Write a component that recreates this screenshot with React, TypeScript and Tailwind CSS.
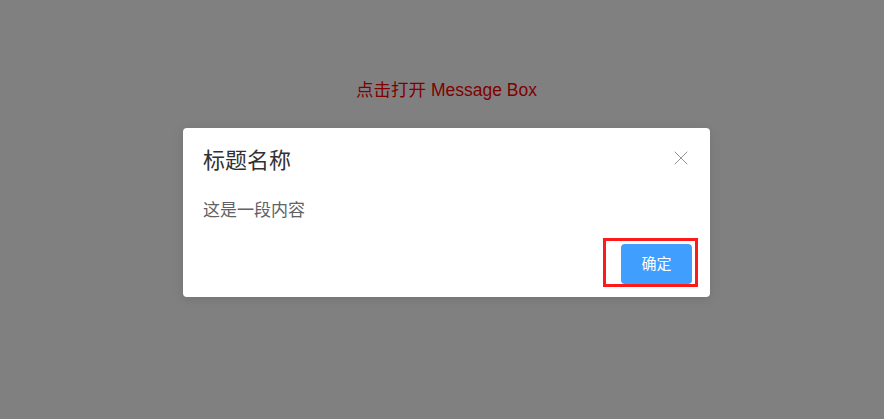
import { X } from "lucide-react"

const cjk = { fontFamily: '"Liberation Sans", "Noto Sans CJK SC", sans-serif' }

export default function App() {
  return (
    <div className="min-h-screen w-full bg-[#808080]" style={cjk}>
      <div className="flex flex-col items-center pl-[9px] pt-[78px]">
        {/* Trigger text */}
        <div className="text-[17.5px] leading-[24px] text-[#800000]">点击打开 Message Box</div>

        {/* Message box */}
        <div className="mt-[26px] w-[527px] rounded-[4px] bg-white pb-[10px] pl-[20px] pr-[12px] pt-[21px] shadow-[0_2px_12px_rgba(0,0,0,0.1)]">
          <div className="flex items-start justify-between">
            <h2 className="text-[22px] leading-[24px] text-[#303133]">标题名称</h2>
            <button className="mr-[5px] mt-[-3px] text-[#909399]">
              <X className="size-[24px]" strokeWidth={1} />
            </button>
          </div>
          <p className="mt-[26px] text-[17px] leading-[24px] text-[#606266]">这是一段内容</p>
          <div className="mt-[15px] flex justify-end">
            <div className="border-[3px] border-[#ff1a1a] pl-[15px] pr-[3px] pt-[3px]">
              <button className="h-[40px] w-[71px] rounded-[4px] bg-[#409eff] text-[15px] text-white">确定</button>
            </div>
          </div>
        </div>
      </div>
    </div>
  )
}
